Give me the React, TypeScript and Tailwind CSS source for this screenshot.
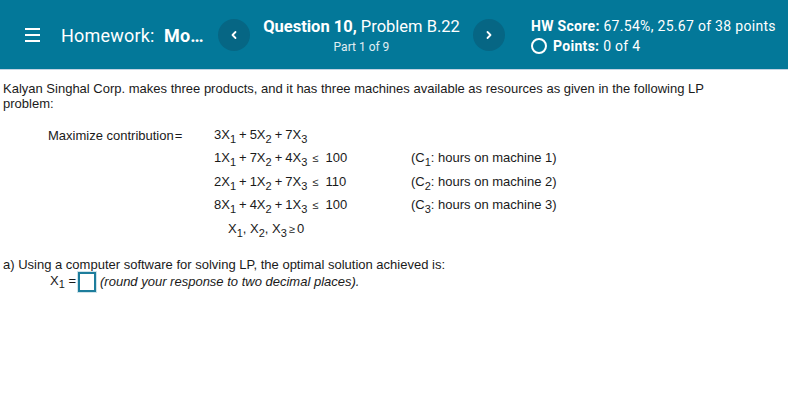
import React from "react";

const rows = [
  { label: "Maximize contribution =", expr: [["3", "1"], ["5", "2"], ["7", "3"]], rhs: "", note: "" },
  { label: "", expr: [["1", "1"], ["7", "2"], ["4", "3"]], rhs: "100", note: "1" },
  { label: "", expr: [["2", "1"], ["1", "2"], ["7", "3"]], rhs: "110", note: "2" },
  { label: "", expr: [["8", "1"], ["4", "2"], ["1", "3"]], rhs: "100", note: "3" },
];

function Sub({ children }: { children: React.ReactNode }) {
  return <sub className="text-[11px] relative top-[0px] align-sub leading-none">{children}</sub>;
}

function Expr({ terms }: { terms: string[][] }) {
  return (
    <>
      {terms.map(([c, i], k) => (
        <span key={k}>
          {k > 0 && <span className="mx-[3px]">+</span>}
          {c}X<Sub>{i}</Sub>
        </span>
      ))}
    </>
  );
}

function NavButton({ dir }: { dir: "prev" | "next" }) {
  return (
    <button className="w-8 h-8 rounded-full bg-[#066684] flex items-center justify-center shrink-0">
      <svg width="8" height="10" viewBox="0 0 8 10" fill="none" stroke="white" strokeWidth="1.8" strokeLinecap="round" strokeLinejoin="round">
        {dir === "prev" ? <path d="M5.5 2 L2.5 5 L5.5 8" /> : <path d="M2.5 2 L5.5 5 L2.5 8" />}
      </svg>
    </button>
  );
}

export default function App() {
  return (
    <div className="w-[788px] h-[402px] bg-white overflow-hidden">
      {/* Header bar */}
      <header className="h-[70px] bg-[#037899] flex items-center text-white font-['Roboto',sans-serif] border-b border-[#c3d3e3]">
        <div className="ml-[25px] w-[15px] flex flex-col gap-[4px] mt-[1px]">
          <span className="h-[2px] bg-white block" />
          <span className="h-[2px] bg-white block" />
          <span className="h-[2px] bg-white block" />
        </div>
        <div className="ml-[21px] text-[18px] tracking-[0.2px] w-[157px] whitespace-nowrap mt-[1px]">
          Homework:&nbsp; <span className="font-bold">Mo…</span>
        </div>
        <NavButton dir="prev" />
        <div className="w-[223px] text-center mt-[2px]">
          <div className="text-[16.5px] leading-[20px] whitespace-nowrap">
            <span className="font-bold">Question 10,</span> Problem B.22
          </div>
          <div className="text-[12px] leading-[16px] mt-[2px] text-[#e0eef3]">Part 1 of 9</div>
        </div>
        <NavButton dir="next" />
        <div className="ml-[26px] text-[14px] tracking-[0.3px] mt-[3px]">
          <div className="leading-[18px] whitespace-nowrap">
            <span className="font-bold">HW Score:</span> 67.54%, 25.67 of 38 points
          </div>
          <div className="flex items-center mt-[2px] leading-[18px]">
            <span className="w-[16px] h-[16px] rounded-full border-2 border-white inline-block mr-[6px]" />
            <span className="font-bold">Points:</span>&nbsp;0 of 4
          </div>
        </div>
      </header>

      {/* Body */}
      <main className="px-[3px] pt-[11px] text-[13px] leading-[15px] text-[#1a1a1a] font-['Liberation_Sans',Arial,sans-serif]">
        <p className="w-[720px]">
          Kalyan Singhal Corp. makes three products, and it has three machines available as resources as given in the following LP problem:
        </p>

        <div className="mt-[13px] ml-[45px] grid grid-cols-[166px_197px_auto] auto-rows-[23.5px] items-center">
          {rows.map((r, idx) => (
            <React.Fragment key={idx}>
              <div className="whitespace-nowrap">
                {r.label && (
                  <>
                    Maximize contribution<span className="ml-[1px]">=</span>
                  </>
                )}
              </div>
              <div className="whitespace-nowrap">
                <Expr terms={r.expr} />
                {r.rhs && (
                  <span className="ml-[5px]">
                    <span className="text-[11px]">≤</span>&nbsp; {r.rhs}
                  </span>
                )}
              </div>
              <div className="whitespace-nowrap">
                {r.note && (
                  <>
                    (C<Sub>{r.note}</Sub>: hours on machine {r.note})
                  </>
                )}
              </div>
            </React.Fragment>
          ))}
          <div />
          <div className="whitespace-nowrap pl-[14px]">
            X<Sub>1</Sub>, X<Sub>2</Sub>, X<Sub>3</Sub>
            <span className="text-[11px] ml-[2px]">≥</span>
            <span className="ml-[2px]">0</span>
          </div>
          <div />
        </div>

        <p className="mt-[15px]">a) Using a computer software for solving LP, the optimal solution achieved is:</p>
        <div className="flex items-center ml-[47px] mt-0">
          <span>
            X<Sub>1</Sub> =
          </span>
          <span className="w-[18px] h-[20px] border-2 border-[#1d7d9c] ml-[2px] mr-[4px] inline-block shadow-[0_0_0_1px_#cfe3ea]" />
          <span className="italic">(round your response to two decimal places).</span>
        </div>
      </main>
    </div>
  );
}
